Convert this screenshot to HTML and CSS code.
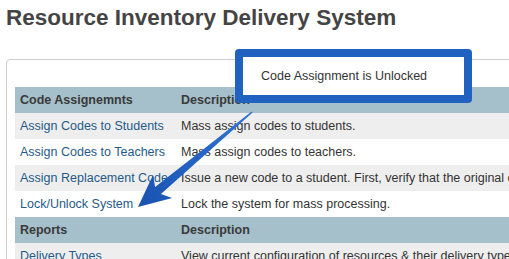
FILE: index.html
```html
<!DOCTYPE HTML>
<html>
<head>
    <meta http-equiv="Content-Type" content="text/html;charset=UTF-8">
    <title>Resource Inventory Delivery System</title>
    <link rel="stylesheet" href="styles.css">
</head>
<body>
<h1 class="title">Resource Inventory Delivery System</h1>
<div class="panel">
    <table class="menu">
        <tr class="head">
            <th class="col1">Code Assignemnts</th>
            <th>Description</th>
        </tr>
        <tr class="odd">
            <td><a href="#">Assign Codes to Students</a></td>
            <td>Mass assign codes to students.</td>
        </tr>
        <tr>
            <td><a href="#">Assign Codes to Teachers</a></td>
            <td>Mass assign codes to teachers.</td>
        </tr>
        <tr class="odd">
            <td><a href="#">Assign Replacement Code</a></td>
            <td>Issue a new code to a student. First, verify that the original code has been used.</td>
        </tr>
        <tr>
            <td><a href="#">Lock/Unlock System</a></td>
            <td>Lock the system for mass processing.</td>
        </tr>
        <tr class="head">
            <th>Reports</th>
            <th>Description</th>
        </tr>
        <tr class="odd">
            <td><a href="#">Delivery Types</a></td>
            <td>View current configuration of resources &amp; their delivery types.</td>
        </tr>
    </table>
</div>
<div class="notice">Code Assignment is Unlocked</div>
<svg class="arrow" width="509" height="259" viewBox="0 0 509 259">
    <defs>
        <linearGradient id="ag" x1="252" y1="112" x2="138" y2="207" gradientUnits="userSpaceOnUse">
            <stop offset="0" stop-color="#2f74d6"/>
            <stop offset="1" stop-color="#1a52b0"/>
        </linearGradient>
    </defs>
    <polygon fill="url(#ag)" points="252.6,112.6 160.9,193.9 172.2,198 138,207 153,175 155.1,186.9 251.6,111.4"/>
</svg>
</body>
</html>
```

FILE: styles.css
```css
* {
    margin: 0;
    padding: 0;
}

body {
    padding: 5px 0 0 6px;
    font-family: "Liberation Sans", Arial, sans-serif;
    font-size: 12.5px;
    color: #333;
    background: #fff;
    overflow: hidden;
    width: 509px;
    height: 259px;
}

.title {
    font-size: 22.5px;
    font-weight: bold;
    color: #444;
    line-height: 26px;
    white-space: nowrap;
}

.panel {
    margin-top: 28px;
    width: 900px;
    border: 1px solid #cfcfcf;
    border-radius: 4px;
    padding: 27px 8px 10px 8px;
}

.menu {
    border-collapse: collapse;
    width: 880px;
    white-space: nowrap;
}

.menu th,
.menu td {
    height: 26px;
    padding: 0 5px;
    text-align: left;
    vertical-align: middle;
}

.menu .col1 {
    width: 151px;
}

.menu td:first-child {
    max-width: 151px;
    overflow: hidden;
}

.head th {
    background: #a5bfcb;
    color: #3a3a3a;
    font-weight: bold;
}

.odd td {
    background: #eeeeee;
}

.menu a {
    color: #1f5a88;
    text-decoration: none;
}

.notice {
    position: absolute;
    left: 235px;
    top: 49px;
    width: 203px;
    height: 38px;
    border: 8px solid #2162c1;
    border-radius: 4px;
    background: #fff;
    padding-left: 18px;
    box-sizing: content-box;
    line-height: 38px;
    color: #333;
    white-space: nowrap;
}

.arrow {
    position: absolute;
    left: 0;
    top: 0;
    pointer-events: none;
}
```
